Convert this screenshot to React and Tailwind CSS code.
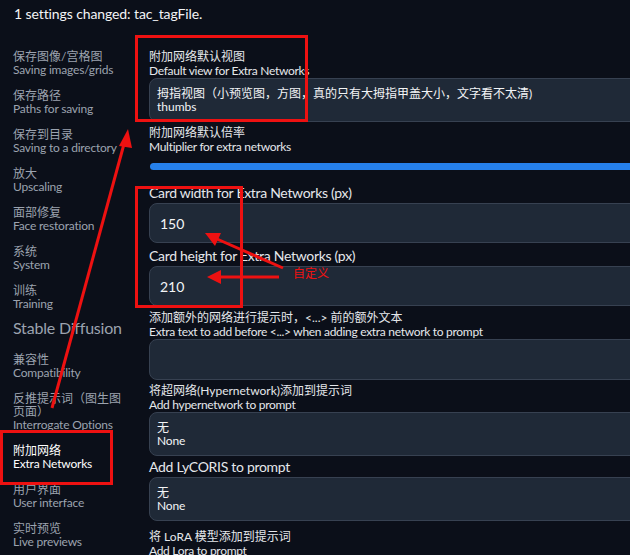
import React from "react";

const navItems = [
  { cn: "保存图像/宫格图", en: "Saving images/grids" },
  { cn: "保存路径", en: "Paths for saving" },
  { cn: "保存到目录", en: "Saving to a directory" },
  { cn: "放大", en: "Upscaling" },
  { cn: "面部修复", en: "Face restoration" },
  { cn: "系统", en: "System" },
  { cn: "训练", en: "Training" },
  { section: "Stable Diffusion" },
  { cn: "兼容性", en: "Compatibility" },
  { cn: "反推提示词（图生图页面）", en: "Interrogate Options" },
  { cn: "附加网络", en: "Extra Networks", active: true },
  { cn: "用户界面", en: "User interface" },
  { cn: "实时预览", en: "Live previews" },
];

function NavItem({ item }) {
  if (item.section) {
    return (
      <div className="-mt-[4px] mb-[4px] h-[17px] text-[16px] leading-[17px] text-[#9ca3af] tracking-[-0.2px]">
        {item.section}
      </div>
    );
  }
  const color = item.active ? "text-white" : "text-[#9ca3af]";
  return (
    <div className={`text-[12px] leading-[13px] ${color}`}>
      <div className="w-[112px]">{item.cn}</div>
      <div className="tracking-[-0.2px]">{item.en}</div>
    </div>
  );
}

function Label({ cn, en }) {
  return (
    <div className="text-[12px] text-[#e5e7eb]">
      <div className="leading-[14px]">{cn}</div>
      <div className="leading-[13px] tracking-[-0.3px]">{en}</div>
    </div>
  );
}

function Box({ className = "", children }) {
  return (
    <div
      className={`rounded-lg border border-[#374151] bg-[#1f2937] ${className}`}
    >
      {children}
    </div>
  );
}

function Choice({ cn, en }) {
  return (
    <Box className="mt-px h-[44px] flex flex-col justify-center px-[7px] text-[12px] leading-[13px] text-[#f3f4f6]">
      <div>{cn}</div>
      <div className="tracking-[-0.2px]">{en}</div>
    </Box>
  );
}

function NumberField({ label, value }) {
  return (
    <div>
      <div className="text-[14px] leading-[18px] text-[#e5e7eb] tracking-[-0.3px]">
        {label}
      </div>
      <Box className="mt-px h-[40px] flex items-center px-[10px] text-[14px] text-[#f3f4f6]">
        {value}
      </Box>
    </div>
  );
}

function Annotations() {
  const red = "#ee1111";
  return (
    <svg
      className="absolute inset-0 pointer-events-none"
      width="630"
      height="555"
      viewBox="0 0 630 555"
    >
      <rect x="136.5" y="36.5" width="170" height="84" fill="none" stroke={red} strokeWidth="3" />
      <rect x="136.5" y="187.5" width="105" height="119" fill="none" stroke={red} strokeWidth="3" />
      <rect x="1.5" y="431.5" width="110" height="52" fill="none" stroke={red} strokeWidth="3" />

      <line x1="52" y1="408" x2="124" y2="144" stroke={red} strokeWidth="3" />
      <polygon points="128,129 119,146 132,148" fill={red} />

      <line x1="283" y1="268" x2="217" y2="239" stroke={red} strokeWidth="3" />
      <polygon points="205,233 221,233 215,246" fill={red} />

      <line x1="279" y1="277" x2="220" y2="277" stroke={red} strokeWidth="3" />
      <polygon points="207,277 221,270 221,284" fill={red} />
    </svg>
  );
}

export default function App() {
  return (
    <div className="relative w-[630px] h-[555px] overflow-hidden bg-[#0b0f19] font-['Lato','Noto_Sans_CJK_SC',sans-serif]">
      {/* Header */}
      <div className="pl-[14px] pt-[4px] h-[50px] text-[14px] leading-[20px] text-[#f3f4f6] tracking-[-0.1px]">
        1 settings changed: tac_tagFile.
      </div>

      <div className="flex">
        {/* Sidebar */}
        <div className="w-[149px] shrink-0 pl-[13px] flex flex-col gap-[13px]">
          {navItems.map((item, i) => (
            <NavItem key={i} item={item} />
          ))}
        </div>

        {/* Settings */}
        <div className="w-[560px] shrink-0 flex flex-col">
          <div>
            <Label cn="附加网络默认视图" en="Default view for Extra Networks" />
            <Box className="mt-px h-[44px] flex flex-col justify-center px-[7px] text-[12px] leading-[13px] text-[#f3f4f6]">
              <div>拇指视图（小预览图，方图，真的只有大拇指甲盖大小，文字看不太清)</div>
              <div>thumbs</div>
            </Box>
          </div>

          <div className="mt-[4px]">
            <Label cn="附加网络默认倍率" en="Multiplier for extra networks" />
            <div className="h-[27px] flex items-center pl-px">
              <div className="h-[7px] w-full rounded-full bg-[#2680eb]" />
            </div>
          </div>

          <div className="mt-[4px]">
            <NumberField label="Card width for Extra Networks (px)" value="150" />
          </div>

          <div className="mt-[4px]">
            <NumberField label="Card height for Extra Networks (px)" value="210" />
          </div>

          <div className="mt-[5px]">
            <Label
              cn="添加额外的网络进行提示时，<...> 前的额外文本"
              en="Extra text to add before <...> when adding extra network to prompt"
            />
            <Box className="mt-px h-[41px]" />
          </div>

          <div className="mt-[4px]">
            <Label cn="将超网络(Hypernetwork)添加到提示词" en="Add hypernetwork to prompt" />
            <Choice cn="无" en="None" />
          </div>

          <div className="mt-[2px]">
            <div className="text-[14px] leading-[18px] text-[#e5e7eb] tracking-[-0.3px]">
              Add LyCORIS to prompt
            </div>
            <Choice cn="无" en="None" />
          </div>

          <div className="mt-[9px]">
            <Label cn="将 LoRA 模型添加到提示词" en="Add Lora to prompt" />
            <Box className="mt-px h-[44px]" />
          </div>
        </div>
      </div>

      <Annotations />
      <div className="absolute left-[293px] top-[266px] text-[12px] leading-[16px] text-[#ee1111]">
        自定义
      </div>
    </div>
  );
}
